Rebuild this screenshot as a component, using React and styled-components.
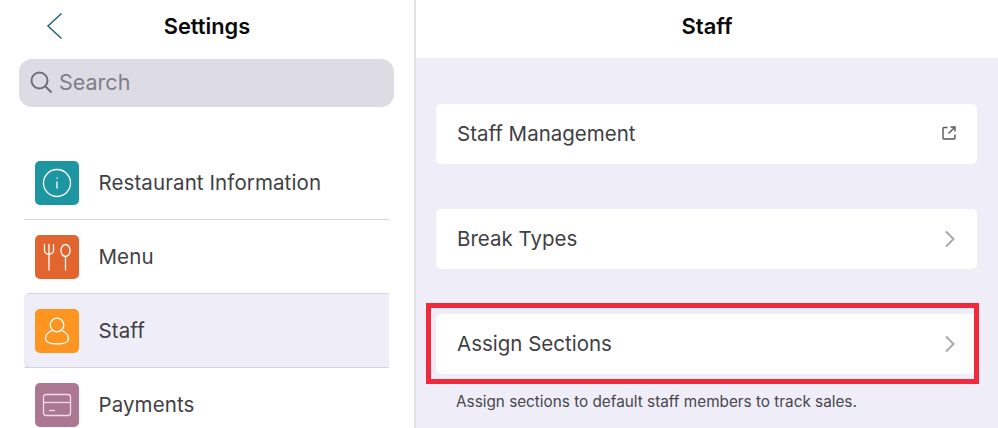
import React from 'react'
import styled, {createGlobalStyle} from 'styled-components'

const GlobalStyle = createGlobalStyle`
    html, body {
        margin: 0;
        padding: 0;
        background: #fff;
    }
    body {
        font-family: "Inter", "Liberation Sans", sans-serif;
        color: #3c3c43;
    }
`

const Page = styled.div`
    display: flex;
    width: 998px;
    height: 428px;
    overflow: hidden;
`

const Sidebar = styled.aside`
    width: 414px;
    flex-shrink: 0;
    border-right: 2px solid #e3e3e6;
    background: #fff;
    padding-top: 8px;
`

const SideHeader = styled.header`
    position: relative;
    display: flex;
    justify-content: center;
    align-items: center;
    height: 35px;
`

const BackIcon = styled.svg`
    position: absolute;
    left: 46px;
    top: 4px;
`

const Title = styled.h1`
    margin: 0;
    font-size: 21.8px;
    font-weight: 600;
    color: #0a0a0a;
`

const SearchBar = styled.div`
    display: flex;
    align-items: center;
    gap: 6px;
    height: 48px;
    box-sizing: border-box;
    margin: 16px 20px 0 19px;
    padding: 0 0 2px 10px;
    border-radius: 13px;
    background: #dddce5;
    font-size: 21.5px;
    color: #7f7e89;
`

const MenuList = styled.nav`
    margin: 38px 25px 0 24px;
`

const MenuRow = styled.div`
    display: flex;
    align-items: center;
    gap: 20px;
    height: 73px;
    padding-left: 11px;
    border-top: 1px solid ${p => (p.$first ? 'transparent' : '#d5d5da')};
    font-size: 20.5px;
    letter-spacing: 0.1px;
    color: #3f3f45;
    background: ${p => (p.$active ? '#efeef8' : 'transparent')};
    border-radius: ${p => (p.$active ? '6px 0 0 6px' : '0')};
    border-bottom: ${p => (p.$active ? '1px solid #d5d5da' : 'none')};
    margin-bottom: ${p => (p.$active ? '-1px' : '0')};
`

const IconTile = styled.div`
    display: flex;
    align-items: center;
    justify-content: center;
    width: 44px;
    height: 44px;
    flex-shrink: 0;
    border-radius: 5px;
    background: ${p => p.$color};
`

const RowLabel = styled.span`
    margin-left: -0.5px;
`

const Content = styled.main`
    flex: 1;
    display: flex;
    flex-direction: column;
    background: #efeef8;
`

const ContentHeader = styled.header`
    display: flex;
    align-items: center;
    justify-content: center;
    height: 58px;
    padding-bottom: 7px;
    box-sizing: border-box;
    background: #fff;
    font-size: 22px;
    font-weight: 600;
    color: #0a0a0a;
`

const CardList = styled.div`
    position: relative;
    display: flex;
    flex-direction: column;
    gap: 45px;
    padding: 46px 21px 0 20px;
`

const Card = styled.div`
    display: flex;
    align-items: center;
    justify-content: space-between;
    height: 60px;
    box-sizing: border-box;
    padding: 0 21px 2px 21px;
    border-radius: 5px;
    background: #fff;
    font-size: 20.5px;
    color: #3f3f45;
`

const ChevronIcon = styled.svg`
    margin-top: 2px;
`

const Hint = styled.p`
    margin: -27px 0 0 20px;
    font-size: 15.3px;
    color: #46464c;
`

const Highlight = styled.div`
    position: absolute;
    left: 10px;
    top: 245px;
    width: 553px;
    height: 81px;
    box-sizing: border-box;
    border: 5px solid #f02a3c;
`

const INFO = (
    <svg width="32" height="32" viewBox="0 0 32 32" fill="none" stroke="#fff" strokeWidth="1.3">
        <circle cx="16" cy="16" r="13.5"/>
        <path d="M16 14.500v7"/>
        <path d="M16 10.500v1.200"/>
    </svg>
)

const UTENSILS = (
    <svg width="32" height="28" viewBox="0 0 32 28" fill="none" stroke="#fff" strokeWidth="1.3" strokeLinecap="round">
        <path d="M3.500 1.500v6c0 2.500 2 3.500 4.500 3.500s4.500-1 4.500-3.500v-6"/>
        <path d="M8 1.500v25.500"/>
        <ellipse cx="24.500" cy="7.500" rx="4.500" ry="6"/>
        <path d="M24.500 13.500v13.500"/>
    </svg>
)

const PERSON = (
    <svg width="26" height="30" viewBox="0 0 26 30" fill="none" stroke="#fff" strokeWidth="1.3">
        <circle cx="13" cy="9" r="6.800"/>
        <path d="M8 14.500C3.500 16.500 1.500 19.500 1.500 22.500c0 3.500 5 5.500 11.500 5.500s11.500-2 11.500-5.500c0-3-2-6-6.500-8"/>
    </svg>
)

const CARD = (
    <svg width="30" height="24" viewBox="0 0 30 24" fill="none" stroke="#f6dbe8" strokeWidth="1.3">
        <rect x="1.500" y="1.500" width="27" height="21" rx="2.500"/>
        <path d="M1.500 9.500h27"/>
        <path d="M7 17.500h6"/>
    </svg>
)

const Chevron = () => (
    <ChevronIcon width="12" height="18" viewBox="0 0 12 18" fill="none" stroke="#a9a9ad" strokeWidth="2">
        <path d="M2 1.500 9.500 9 2 16.500"/>
    </ChevronIcon>
)

const ExternalLink = () => (
    <svg width="14" height="14" viewBox="0 0 14 14" fill="none" stroke="#55555a" strokeWidth="1.4">
        <path d="M5.500 1.500H2a1 1 0 0 0-1 1V12a1 1 0 0 0 1 1h10a1 1 0 0 0 1-1V8.500"/>
        <path d="M6.500 7.500 12.500 1.500"/>
        <path d="M8.500 1h4.500v4.500"/>
    </svg>
)

const MENU = [
    {label: 'Restaurant Information', color: '#1d96a2', icon: INFO},
    {label: 'Menu', color: '#e2652f', icon: UTENSILS},
    {label: 'Staff', color: '#fd9520', icon: PERSON, active: true},
    {label: 'Payments', color: '#ab7791', icon: CARD},
]

const App = () => {
    return (
        <>
            <GlobalStyle/>
            <Page>
                <Sidebar>
                    <SideHeader>
                        <BackIcon width="18" height="28" viewBox="0 0 18 28" fill="none" stroke="#1f6579" strokeWidth="1.5">
                            <path d="M15.500 1.500 2 14l13.500 12.500"/>
                        </BackIcon>
                        <Title>Settings</Title>
                    </SideHeader>
                    <SearchBar>
                        <svg width="24" height="24" viewBox="0 0 24 24" fill="none" stroke="#6f6f78" strokeWidth="2">
                            <circle cx="10.500" cy="10.500" r="8"/>
                            <path d="M16.500 16.500 22.500 22.500"/>
                        </svg>
                        Search
                    </SearchBar>
                    <MenuList>
                        {MENU.map((item, i) => (
                            <MenuRow key={item.label} $first={i === 0} $active={item.active}>
                                <IconTile $color={item.color}>{item.icon}</IconTile>
                                <RowLabel>{item.label}</RowLabel>
                            </MenuRow>
                        ))}
                    </MenuList>
                </Sidebar>
                <Content>
                    <ContentHeader>Staff</ContentHeader>
                    <CardList>
                        <Card>Staff Management<ExternalLink/></Card>
                        <Card>Break Types<Chevron/></Card>
                        <Card>Assign Sections<Chevron/></Card>
                        <Hint>Assign sections to default staff members to track sales.</Hint>
                        <Highlight/>
                    </CardList>
                </Content>
            </Page>
        </>
    )
}

export default App
